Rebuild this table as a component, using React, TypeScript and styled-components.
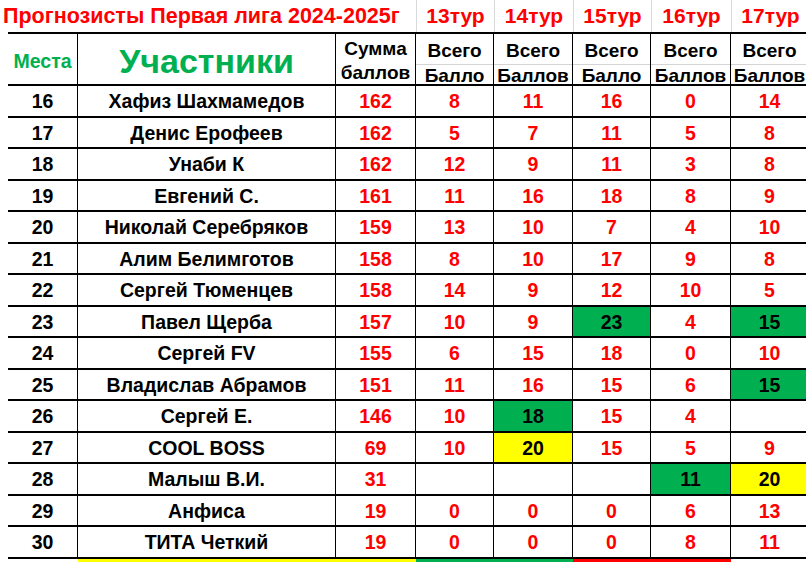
import React from 'react'
import styled, { createGlobalStyle } from 'styled-components'

const RED = '#ff0000'
const GREEN = '#00b050'
const YELLOW = '#ffff00'
const COLS = '70px 258px 80px 78px 79px 78px 80px 78px'

const GlobalStyle = createGlobalStyle`
  html, body {
    margin: 0;
    padding: 0;
    background: #fff;
    overflow: hidden;
  }
  body {
    font-family: "Liberation Sans", Arial, sans-serif;
    font-weight: bold;
  }
`

const Sheet = styled.div`
  width: 820px;
  height: 562px;
  overflow: hidden;
`

const TitleRow = styled.div`
  display: grid;
  grid-template-columns: 416px 78px 79px 78px 80px 78px;
  height: 32px;
`

const Title = styled.div`
  color: ${RED};
  font-size: 21.5px;
  padding-left: 3px;
  line-height: 32px;
  white-space: nowrap;
  overflow: hidden;
`

const TourLabel = styled.div`
  color: ${RED};
  font-size: 21px;
  line-height: 32px;
  text-align: center;
  border-left: 1px solid #d9d9d9;
`

const Table = styled.div`
  margin-left: 8px;
  border-top: 2px solid #000;
`

const HeaderRow = styled.div`
  display: grid;
  grid-template-columns: ${COLS};
  height: 52px;
  border-bottom: 2px solid #000;
  box-sizing: border-box;
`

const HeadCell = styled.div<{ $size: number }>`
  display: flex;
  align-items: center;
  justify-content: center;
  border-right: 1px solid #000;
  color: ${GREEN};
  font-size: ${(p) => p.$size}px;
  padding-top: 4px;
`

const StackCell = styled.div`
  display: flex;
  flex-direction: column;
  border-right: 1px solid #000;
  font-size: 19px;
  line-height: 1;
  color: #000;
`

const Half = styled.div<{ $h: number; $shift?: number; $divider?: boolean }>`
  height: ${(p) => p.$h}px;
  padding-top: ${(p) => p.$shift || 0}px;
  display: flex;
  align-items: center;
  justify-content: center;
  white-space: nowrap;
  box-sizing: border-box;
  border-bottom: ${(p) => (p.$divider ? '1px solid #d4d4d4' : 'none')};
`

const Row = styled.div<{ $tall: boolean }>`
  display: grid;
  grid-template-columns: ${COLS};
  height: ${(p) => (p.$tall ? 32 : 31)}px;
  border-bottom: 2px solid #000;
  box-sizing: border-box;
`

const Cell = styled.div<{ $bg?: string; $color: string }>`
  display: flex;
  align-items: center;
  justify-content: center;
  padding-top: 1px;
  border-right: 1px solid #000;
  background: ${(p) => p.$bg || 'transparent'};
  color: ${(p) => p.$color};
  font-size: 19.5px;
  white-space: nowrap;
`

const Strip = styled.div`
  display: grid;
  grid-template-columns: ${COLS};
  height: 4px;
`

const StripCell = styled.div<{ $bg?: string; $span: number }>`
  grid-column: span ${(p) => p.$span};
  background: ${(p) => p.$bg || 'transparent'};
`

type Score = number | null
type Mark = 'g' | 'y' | undefined

interface Player {
  place: number
  name: string
  sum: number
  scores: Score[]
  marks?: Mark[]
}

const players: Player[] = [
  { place: 16, name: 'Хафиз Шахмамедов', sum: 162, scores: [8, 11, 16, 0, 14] },
  { place: 17, name: 'Денис Ерофеев', sum: 162, scores: [5, 7, 11, 5, 8] },
  { place: 18, name: 'Унаби К', sum: 162, scores: [12, 9, 11, 3, 8] },
  { place: 19, name: 'Евгений С.', sum: 161, scores: [11, 16, 18, 8, 9] },
  { place: 20, name: 'Николай Серебряков', sum: 159, scores: [13, 10, 7, 4, 10] },
  { place: 21, name: 'Алим Белимготов', sum: 158, scores: [8, 10, 17, 9, 8] },
  { place: 22, name: 'Сергей Тюменцев', sum: 158, scores: [14, 9, 12, 10, 5] },
  {
    place: 23,
    name: 'Павел Щерба',
    sum: 157,
    scores: [10, 9, 23, 4, 15],
    marks: [undefined, undefined, 'g', undefined, 'g'],
  },
  { place: 24, name: 'Сергей FV', sum: 155, scores: [6, 15, 18, 0, 10] },
  {
    place: 25,
    name: 'Владислав Абрамов',
    sum: 151,
    scores: [11, 16, 15, 6, 15],
    marks: [undefined, undefined, undefined, undefined, 'g'],
  },
  {
    place: 26,
    name: 'Сергей Е.',
    sum: 146,
    scores: [10, 18, 15, 4, null],
    marks: [undefined, 'g'],
  },
  {
    place: 27,
    name: 'COOL BOSS',
    sum: 69,
    scores: [10, 20, 15, 5, 9],
    marks: [undefined, 'y'],
  },
  {
    place: 28,
    name: 'Малыш В.И.',
    sum: 31,
    scores: [null, null, null, 11, 20],
    marks: [undefined, undefined, undefined, 'g', 'y'],
  },
  { place: 29, name: 'Анфиса', sum: 19, scores: [0, 0, 0, 6, 13] },
  { place: 30, name: 'ТИТА Четкий', sum: 19, scores: [0, 0, 0, 8, 11] },
]

const tours = [
  { label: '13тур', bottom: 'Балло' },
  { label: '14тур', bottom: 'Баллов' },
  { label: '15тур', bottom: 'Балло' },
  { label: '16тур', bottom: 'Баллов' },
  { label: '17тур', bottom: 'Баллов' },
]

const markBg = (m: Mark) => (m === 'g' ? GREEN : m === 'y' ? YELLOW : undefined)

const App = () => (
  <Sheet>
    <GlobalStyle />
    <TitleRow>
      <Title>Прогнозисты Первая лига 2024-2025г</Title>
      {tours.map((t) => (
        <TourLabel key={t.label}>{t.label}</TourLabel>
      ))}
    </TitleRow>
    <Table>
      <HeaderRow>
        <HeadCell $size={19.5}>Места</HeadCell>
        <HeadCell $size={34}>Участники</HeadCell>
        <StackCell>
          <Half $h={27} $shift={2}>
            Сумма
          </Half>
          <Half $h={23}>баллов</Half>
        </StackCell>
        {tours.map((t) => (
          <StackCell key={t.label}>
            <Half $h={31} $shift={3} $divider>
              Всего
            </Half>
            <Half $h={19} $shift={2}>
              {t.bottom}
            </Half>
          </StackCell>
        ))}
      </HeaderRow>
      {players.map((p, i) => (
        <Row key={p.place} $tall={i % 2 === 0}>
          <Cell $color="#000">{p.place}</Cell>
          <Cell $color="#000">{p.name}</Cell>
          <Cell $color={RED}>{p.sum}</Cell>
          {p.scores.map((s, j) => {
            const bg = markBg(p.marks?.[j])
            return (
              <Cell key={j} $bg={bg} $color={bg ? '#000' : RED}>
                {s}
              </Cell>
            )
          })}
        </Row>
      ))}
      <Strip>
        <StripCell $span={1} />
        <StripCell $span={2} $bg={YELLOW} />
        <StripCell $span={2} $bg={GREEN} />
        <StripCell $span={2} $bg={RED} />
        <StripCell $span={1} />
      </Strip>
    </Table>
  </Sheet>
)

export default App
